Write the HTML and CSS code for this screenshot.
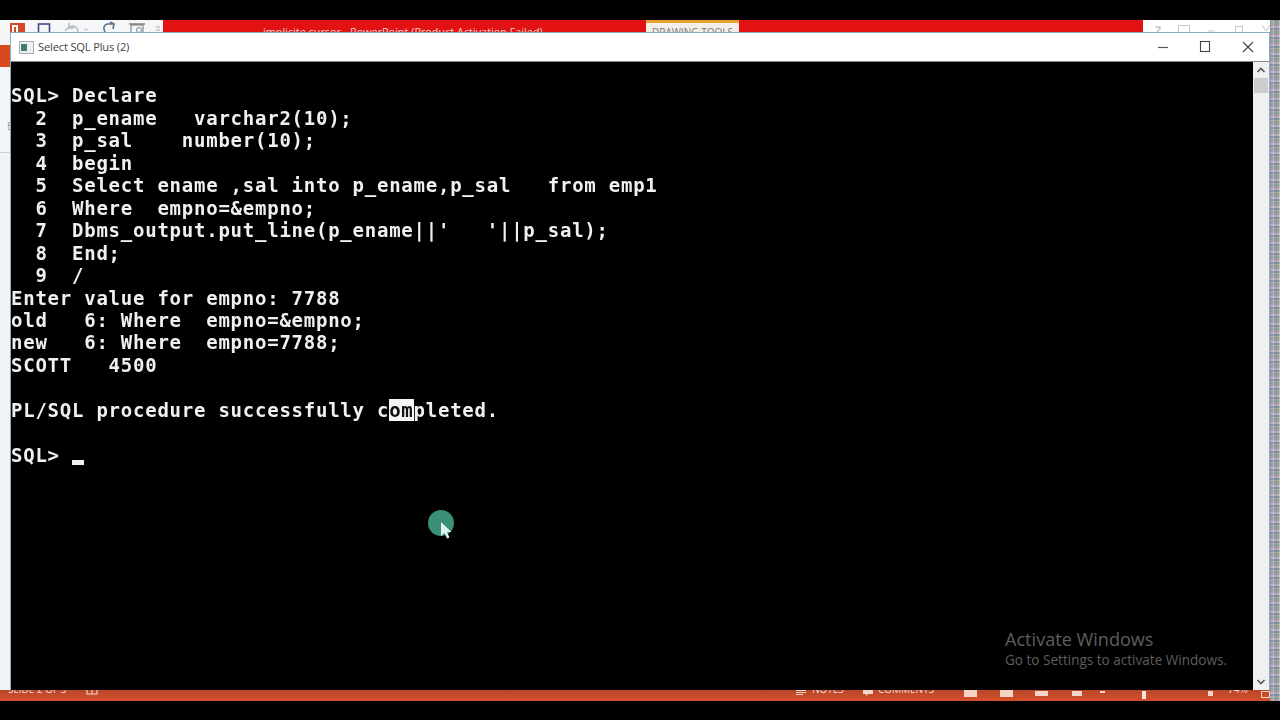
FILE: index.html
```html
<!DOCTYPE html>
<html lang="en">
<head>
<meta charset="utf-8">
<title>Select SQL Plus (2)</title>
<link rel="stylesheet" href="styles.css">
</head>
<body>
<div class="stage">
  <div class="app">
    <div class="ribbon">
      <div class="qat">
        <svg class="qat-icons" width="163" height="12" viewBox="0 0 163 12">
          <rect x="10" y="3" width="15" height="9" fill="#d24726"/>
          <rect x="12" y="5" width="6" height="7" fill="#fff"/>
          <rect x="14" y="7" width="2" height="5" fill="#d24726"/>
          <rect x="38.5" y="4" width="11" height="9" fill="none" stroke="#4a4a8a" stroke-width="1.6"/>
          <path d="M65 11 L69 7 L73 6 Q78 7 78 12 M69 3 V8 H74" fill="none" stroke="#b5bcc5" stroke-width="1.5"/>
          <path d="M84 9 l2 1 l2 -1" fill="none" stroke="#b5bcc5"/>
          <path d="M105 12 Q102 6 107 4 L114 4 M110 2 L114 4 L113 9" fill="none" stroke="#5a7390" stroke-width="1.6"/>
          <rect x="131" y="5" width="12" height="8" fill="none" stroke="#888" stroke-width="1.2"/>
          <path d="M129 4 H145" stroke="#777" stroke-width="1.4"/>
          <circle cx="139" cy="10" r="2.5" fill="none" stroke="#6a8aa5"/>
          <path d="M156 7 h4 M156 10 h4" stroke="#a8a8a8"/>
        </svg>
      </div>
      <div class="titleband">
        <span class="doc-title">implicite cursor - PowerPoint (Product Activation Failed)</span>
        <span class="tools-tab">DRAWING TOOLS</span>
      </div>
      <div class="winbtns">
        <span class="winbtn-q">?</span>
        <svg width="92" height="12" viewBox="0 0 92 12">
          <rect x="0.5" y="5.5" width="11" height="7" fill="none" stroke="#c8c8c8"/>
          <path d="M30 11 H37" stroke="#c8c8c8"/>
          <rect x="57.5" y="6.5" width="7" height="6" fill="none" stroke="#c8c8c8"/>
          <path d="M84 5 L88 11 M92 5 L88 11" stroke="#c8c8c8"/>
        </svg>
      </div>
    </div>
    <div class="middle">
      <div class="side">
        <div class="side-gap"></div>
        <div class="side-tab"></div>
        <div class="side-list"><span class="side-letter">E</span></div>
        <div class="side-rest"></div>
      </div>
    </div>
    <div class="status">
      <span class="st-slide">SLIDE 2 OF 3</span>
      <svg class="st-lang" width="14" height="6" viewBox="0 0 14 6"><path d="M2 0 V4 H12 V0 M7 0 V4" fill="none" stroke="#f3d5c8" stroke-width="1.2"/></svg>
      <span class="st-spacer"></span>
      <svg class="st-ic st-ic-notes" width="10" height="5" viewBox="0 0 10 5"><path d="M0 0.5 H10 M0 2.5 H10 M0 4.5 H7" stroke="#f3d5c8"/></svg>
      <span class="st-item st-notes">NOTES</span>
      <svg class="st-ic st-ic-comments" width="10" height="6" viewBox="0 0 10 6"><path d="M0 0 H10 V4 H5 L3 6 V4 H0 Z" fill="#f3d5c8"/></svg>
      <span class="st-item st-comments">COMMENTS</span>
      <span class="st-view st-view-a"></span>
      <span class="st-view st-view-b"></span>
      <span class="st-view st-view-c"></span>
      <span class="st-view st-view-d"></span>
      <span class="st-minus"></span>
      <span class="st-thumb"></span>
      <span class="st-plus"></span>
      <span class="st-zoom">74%</span>
      <span class="st-fit"></span>
    </div>
  </div>
  <div class="noise"></div>

  <div class="window">
    <div class="titlebar">
      <svg class="appicon" width="15" height="13" viewBox="0 0 15 13">
        <rect x="0.5" y="0.5" width="14" height="12" fill="#eef1f2" stroke="#a9b0b4"/>
        <rect x="2" y="3" width="6" height="7" fill="#3f7f6f"/>
      </svg>
      <span class="wintitle">Select SQL Plus (2)</span>
      <div class="controls">
        <svg width="96" height="16" viewBox="0 0 96 16">
          <path d="M0 8.5 H10" stroke="#555" stroke-width="1.2"/>
          <rect x="42.5" y="2.5" width="9" height="10" fill="none" stroke="#444" stroke-width="1.1"/>
          <path d="M85 3 L95 13 M95 3 L85 13" stroke="#444" stroke-width="1.1"/>
        </svg>
      </div>
    </div>
    <div class="content">
      <pre class="console">
SQL&gt; Declare
  2  p_ename   varchar2(10);
  3  p_sal    number(10);
  4  begin
  5  Select ename ,sal into p_ename,p_sal   from emp1
  6  Where  empno=&amp;empno;
  7  Dbms_output.put_line(p_ename||'   '||p_sal);
  8  End;
  9  /
Enter value for empno: 7788
old   6: Where  empno=&amp;empno;
new   6: Where  empno=7788;
SCOTT   4500

PL/SQL procedure successfully c<span class="sel">om</span>pleted.

SQL&gt; <span class="cursor"></span></pre>
      <div class="scrollbar">
        <svg class="arrow" width="16" height="16" viewBox="0 0 16 16"><path d="M4.5 10 L8 6.5 L11.5 10" fill="none" stroke="#555" stroke-width="1.6"/></svg>
        <div class="thumb"></div>
        <div class="track"></div>
        <svg class="arrow" width="16" height="16" viewBox="0 0 16 16"><path d="M4.5 6 L8 9.5 L11.5 6" fill="none" stroke="#555" stroke-width="1.6"/></svg>
      </div>
    </div>
  </div>

  <div class="watermark">
    <div class="wm-title">Activate Windows</div>
    <div class="wm-sub">Go to Settings to activate Windows.</div>
  </div>

  <svg class="pointer" width="28" height="34" viewBox="0 0 28 34">
    <circle cx="14" cy="13" r="13" fill="#3a8f78"/>
    <path d="M14 12 V26 L17.5 23 L20 28.5 L22.5 27.5 L20 22 L24.5 22 Z" fill="#dff5ee"/>
  </svg>
</div>
</body>
</html>
```
FILE: styles.css
```css
* { box-sizing: border-box; }
html, body { margin: 0; padding: 0; background: #000; width: 1280px; height: 720px; overflow: hidden; }
.stage { position: relative; margin-top: 20px; height: 681px; display: flex; }
.app { flex: 1; display: flex; flex-direction: column; min-width: 0; }

/* ribbon strip peeking out above the console window */
.ribbon { height: 12px; display: flex; overflow: hidden; flex: none; background: #fff; }
.qat { width: 163px; flex: none; background: #f4f6f8; }
.qat-icons { display: block; }
.titleband { width: 980px; flex: none; background: #e21212; position: relative; display: flex; }
.doc-title { margin: 5px 0 0 100px; width: 383px; flex: none; font: 10.85px/14px "Open Sans", sans-serif; color: #f6d0d0; white-space: nowrap; }
.tools-tab { width: 93px; flex: none; background: #f2eee8; border-top: 3px solid #e8a12e; padding-top: 2px; text-align: center; font: 10px/14px "Open Sans", sans-serif; color: #7a7a7a; white-space: nowrap; }
.winbtns { flex: 1; display: flex; background: #fff; }
.winbtn-q { margin: 3px 0 0 12px; width: 23px; flex: none; font: bold 13px/14px "Open Sans", sans-serif; color: #c8c8c8; }
.winbtns svg { display: block; }

/* the presentation's left pane */
.middle { flex: 1; min-height: 0; background: #f3f3f3; }
.side { width: 11px; height: 100%; display: flex; flex-direction: column; background: #f2f3f5; }
.side-gap { height: 13px; background: #f4f4f4; }
.side-tab { height: 22px; background: #d9481f; }
.side-list { height: 86px; border-bottom: 1px solid #d0d0d0; padding: 53px 0 0 7px; overflow: hidden; background: #f4f5f6; }
.side-letter { display: block; font: 10px/12px "Open Sans", sans-serif; color: #9a9a9a; }
.side-rest { flex: 1; }

/* status bar, mostly covered by the window */
.status { height: 11px; flex: none; overflow: hidden; display: flex; align-items: flex-end; padding: 0 0 6px 8px; background: linear-gradient(#b9462a, #d6502a); color: #f5ddd2; font: 10px/12px "Open Sans", sans-serif; }
.st-slide { width: 77px; flex: none; white-space: nowrap; }
.st-lang { flex: none; margin-bottom: -1px; }
.st-spacer { flex: 1; }
.st-ic { flex: none; display: block; }
.st-ic-notes { margin-right: 6px; margin-bottom: 0; }
.st-ic-comments { margin-right: 5px; margin-bottom: -1px; }
.st-item { flex: none; white-space: nowrap; }
.st-notes { width: 31px; margin-right: 20px; }
.st-comments { width: 57px; margin-right: 29px; }
.st-view { flex: none; height: 7px; margin-bottom: -2px; background: #f3d5c8; }
.st-view-a { width: 13px; margin-right: 23px; }
.st-view-b { width: 13px; margin-right: 22px; }
.st-view-c { width: 13px; margin-right: 24px; height: 5px; margin-bottom: -1px; }
.st-view-d { width: 10px; margin-right: 18px; height: 5px; margin-bottom: -1px; }
.st-minus { width: 5px; height: 2px; margin-bottom: 2px; margin-right: 37px; background: #f3d5c8; flex: none; }
.st-thumb { width: 4px; height: 8px; margin-bottom: -4px; margin-right: 62px; background: #f5e5dc; flex: none; }
.st-plus { width: 5px; height: 5px; margin-bottom: -1px; margin-right: 15px; background: #f3d5c8; flex: none; }
.st-zoom { width: 20px; flex: none; margin-right: 13px; white-space: nowrap; }
.st-fit { width: 9px; height: 7px; margin-bottom: -3px; border: 1px solid #f3d5c8; flex: none; }

.noise {
  width: 10px; flex: none;
  background:
    repeating-linear-gradient(90deg, rgba(130,80,130,.35) 0 1px, rgba(90,150,120,.3) 1px 3px, rgba(230,210,190,.35) 3px 4px, rgba(90,100,170,.3) 4px 6px),
    repeating-linear-gradient(0deg, #b8a8b6 0 2px, #9db1a6 2px 4px, #cbb9a6 4px 5px, #8e99b4 5px 7px, #d4c6d0 7px 9px);
}

/* console window */
.window { position: absolute; left: 10px; top: 12px; width: 1260px; height: 658px; display: flex; flex-direction: column; border: 1px solid #86aecb; border-bottom: 0; background: #fff; }
.titlebar { height: 29px; flex: none; display: flex; align-items: center; padding-left: 8px; background: #fff; border-bottom: 1px solid #8a8a8a; }
.appicon { flex: none; margin-right: 4px; }
.wintitle { font: 11.2px/16px "Open Sans", sans-serif; color: #444; white-space: nowrap; letter-spacing: -0.2px; }
.controls { margin-left: auto; margin-right: 15px; display: flex; }
.controls svg { display: block; }

.content { flex: 1; min-height: 0; display: flex; }
.console {
  flex: 1; margin: 0; padding: 22.3px 0 0; background: #000; color: #f0f0f0;
  font: bold 19px/22.47px "DejaVu Sans Mono", "Liberation Mono", monospace;
  letter-spacing: 0.76px;
  filter: blur(0.35px);
  overflow: hidden; white-space: pre;
}
.sel { background: #f4f4f4; color: #111; }
.cursor { display: inline-block; width: 12px; height: 5px; background: #f0f0f0; vertical-align: -3px; }

.scrollbar { width: 16px; flex: none; display: flex; flex-direction: column; background: #f0f0f0; }
.arrow { display: block; flex: none; }
.thumb { height: 15px; flex: none; margin: 0 1px; background: #cdcdcd; }
.track { flex: 1; }

.watermark { position: absolute; left: 1005px; top: 607px; color: #5e5e5e; white-space: nowrap; font-family: "Open Sans", sans-serif; }
.wm-title { font-size: 18.1px; line-height: 24px; }
.wm-sub { font-size: 13.55px; line-height: 19px; }

.pointer { position: absolute; left: 427px; top: 490px; display: block; }
```
